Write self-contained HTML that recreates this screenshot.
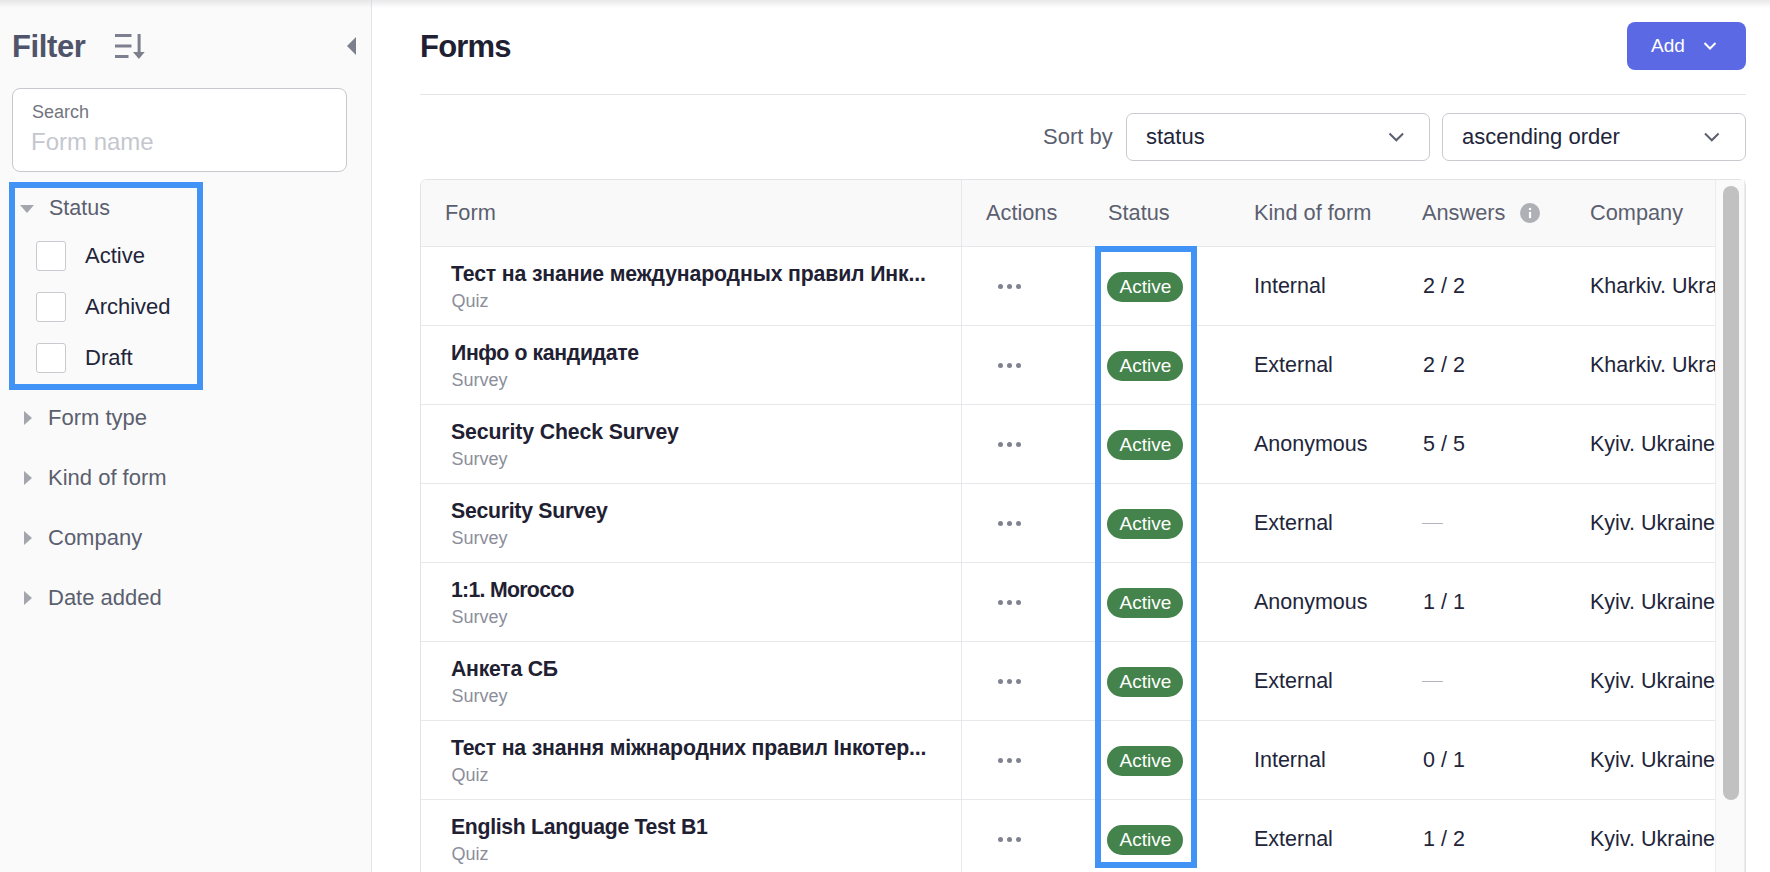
<!DOCTYPE html>
<html><head><meta charset="utf-8"><style>
*{box-sizing:border-box;margin:0;padding:0}
html,body{width:1770px;height:872px;overflow:hidden;background:#fff;font-family:"Liberation Sans",sans-serif}
.a{position:absolute}
.t{position:absolute;line-height:1;white-space:nowrap}
#side{position:absolute;left:0;top:0;width:372px;height:872px;background:#fafafa;border-right:1px solid #e3e3e7}
#shadow{position:absolute;left:0;top:0;width:1770px;height:8px;background:linear-gradient(rgba(210,210,214,0.5),rgba(240,240,242,0));z-index:50}
.cb{position:absolute;left:36px;width:30px;height:30px;border:1px solid #c9cacf;border-radius:3px;background:#fff}
.rt{position:absolute;left:24px;width:0;height:0;border-top:7px solid transparent;border-bottom:7px solid transparent;border-left:8px solid #a4a6ad}
.dot{position:absolute;width:5px;height:5px;border-radius:50%;background:#7f828f}
.badge{position:absolute;left:1107px;width:76px;height:30px;border-radius:15px;background:#44834b}
</style></head><body>
<div id="side"></div>
<div class="t" style="left:12px;top:31px;font-size:31px;font-weight:700;color:#50546a;letter-spacing:-0.4px">Filter</div>
<svg class="a" style="left:112px;top:30px" width="36" height="32" viewBox="112 30 36 32">
<rect x="115" y="34" width="16.5" height="3" fill="#7c7f8d"/><rect x="115" y="44.5" width="16.5" height="3" fill="#7c7f8d"/>
<rect x="115" y="55" width="13.5" height="3" fill="#7c7f8d"/><rect x="137.6" y="34" width="3" height="19" fill="#7c7f8d"/>
<polygon points="133,52 144.7,52 138.9,59" fill="#7c7f8d"/></svg>
<svg class="a" style="left:340px;top:30px" width="24" height="32" viewBox="340 30 24 32"><polygon points="356,37 356,55 347,46" fill="#7c7f8d"/></svg>
<div class="a" style="left:12px;top:88px;width:335px;height:84px;border:1px solid #c8c9cf;border-radius:8px;background:#fff"></div>
<div class="t" style="left:32px;top:103px;font-size:18px;color:#72757f;">Search</div>
<div class="t" style="left:31px;top:130px;font-size:24px;color:#c5c7cf;">Form name</div>
<svg class="a" style="left:18px;top:203px" width="18" height="12" viewBox="18 203 18 12"><polygon points="20,205 34,205 27,213" fill="#a4a6ad"/></svg>
<div class="t" style="left:49px;top:198px;font-size:21.5px;color:#5b5f6f;">Status</div>
<div class="cb" style="top:241px"></div>
<div class="t" style="left:85px;top:245px;font-size:22px;color:#22253a;">Active</div>
<div class="cb" style="top:292px"></div>
<div class="t" style="left:85px;top:296px;font-size:22px;color:#22253a;">Archived</div>
<div class="cb" style="top:343px"></div>
<div class="t" style="left:85px;top:347px;font-size:22px;color:#22253a;">Draft</div>
<div class="rt" style="top:411px"></div>
<div class="t" style="left:48px;top:407px;font-size:22px;color:#5b5f6f;">Form type</div>
<div class="rt" style="top:471px"></div>
<div class="t" style="left:48px;top:467px;font-size:22px;color:#5b5f6f;">Kind of form</div>
<div class="rt" style="top:531px"></div>
<div class="t" style="left:48px;top:527px;font-size:22px;color:#5b5f6f;">Company</div>
<div class="rt" style="top:591px"></div>
<div class="t" style="left:48px;top:587px;font-size:22px;color:#5b5f6f;">Date added</div>
<div class="a" style="left:9px;top:182px;width:194px;height:208px;border:6px solid #4293f6;z-index:40"></div>
<div class="t" style="left:420px;top:31px;font-size:31px;font-weight:700;color:#1f2133;letter-spacing:-0.8px">Forms</div>
<div class="a" style="left:1627px;top:22px;width:119px;height:48px;border-radius:8px;background:#5c69e5"></div>
<div class="t" style="left:1651px;top:36px;font-size:19px;color:#fff;">Add</div>
<svg class="a" style="left:1700px;top:38px" width="20" height="16" viewBox="1700 38 20 16"><polyline points="1704.5,43 1710,48.5 1715.5,43" fill="none" stroke="#fff" stroke-width="2"/></svg>
<div class="a" style="left:420px;top:94px;width:1326px;height:1px;background:#e5e5e9"></div>
<div class="t" style="left:1043px;top:126px;font-size:22px;color:#5b5f6f;">Sort by</div>
<div class="a" style="left:1126px;top:113px;width:304px;height:48px;border:1px solid #c9cacf;border-radius:7px"></div>
<div class="t" style="left:1146px;top:126px;font-size:22px;color:#22253a;">status</div>
<svg class="a" style="left:1385px;top:128px" width="24" height="18" viewBox="1385 128 24 18"><polyline points="1389.5,133.5 1396.3,140.3 1403.1,133.5" fill="none" stroke="#5b5f6f" stroke-width="2"/></svg>
<div class="a" style="left:1442px;top:113px;width:304px;height:48px;border:1px solid #c9cacf;border-radius:7px"></div>
<div class="t" style="left:1462px;top:126px;font-size:22px;color:#22253a;">ascending order</div>
<svg class="a" style="left:1700px;top:128px" width="24" height="18" viewBox="1700 128 24 18"><polyline points="1705,133.5 1711.8,140.3 1718.6,133.5" fill="none" stroke="#5b5f6f" stroke-width="2"/></svg>
<div class="a" style="left:420px;top:179px;width:1326px;height:720px;border:1px solid #e3e3e7;border-radius:7px;overflow:hidden;background:#fff"><div class="a" style="left:0;top:0;width:1324px;height:67px;background:#f9f9fa"></div></div>
<div class="a" style="left:961px;top:180px;width:1px;height:692px;background:#e8e8ec"></div>
<div class="t" style="left:445px;top:202px;font-size:21.75px;color:#5b5f6f;">Form</div>
<div class="t" style="left:986px;top:202px;font-size:21.75px;color:#5b5f6f;">Actions</div>
<div class="t" style="left:1108px;top:202px;font-size:21.75px;color:#5b5f6f;">Status</div>
<div class="t" style="left:1254px;top:202px;font-size:21.75px;color:#5b5f6f;">Kind of form</div>
<div class="t" style="left:1422px;top:202px;font-size:21.75px;color:#5b5f6f;">Answers</div>
<div class="t" style="left:1590px;top:202px;font-size:21.75px;color:#5b5f6f;">Company</div>
<svg class="a" style="left:1520px;top:203px" width="20" height="20" viewBox="0 0 20 20"><circle cx="10" cy="10" r="10" fill="#afb0b6"/>
<rect x="8.9" y="8.9" width="2.2" height="6.2" fill="#fff"/><rect x="8.9" y="4.9" width="2.2" height="2.1" fill="#fff"/></svg>
<div class="a" style="left:421px;top:246px;width:1294px;height:1px;background:#e8e8ec"></div>
<div class="t" style="left:451px;top:264px;font-size:21.25px;font-weight:700;color:#1f2133;letter-spacing:-0.15px">Тест на знание международных правил Инк...</div>
<div class="t" style="left:451.5px;top:292px;font-size:18px;color:#8b8e9a;">Quiz</div>
<div class="dot" style="left:998.2px;top:283.8px"></div>
<div class="dot" style="left:1007.2px;top:283.8px"></div>
<div class="dot" style="left:1016.2px;top:283.8px"></div>
<div class="badge" style="top:272px"></div>
<div class="t" style="left:1119.5px;top:277px;font-size:19px;color:#fff;">Active</div>
<div class="t" style="left:1254px;top:276px;font-size:21.5px;color:#22253a;">Internal</div>
<div class="t" style="left:1423px;top:276px;font-size:21.5px;color:#22253a;">2 / 2</div>
<div class="a" style="left:1590px;top:247px;width:125px;height:78px;overflow:hidden"><div class="t" style="left:0px;top:29px;font-size:21.5px;color:#22253a;">Kharkiv. Ukraine</div></div>
<div class="a" style="left:421px;top:325px;width:1294px;height:1px;background:#e8e8ec"></div>
<div class="t" style="left:451px;top:343px;font-size:21.25px;font-weight:700;color:#1f2133;letter-spacing:-0.37px">Инфо о кандидате</div>
<div class="t" style="left:451.5px;top:371px;font-size:18px;color:#8b8e9a;">Survey</div>
<div class="dot" style="left:998.2px;top:362.8px"></div>
<div class="dot" style="left:1007.2px;top:362.8px"></div>
<div class="dot" style="left:1016.2px;top:362.8px"></div>
<div class="badge" style="top:351px"></div>
<div class="t" style="left:1119.5px;top:356px;font-size:19px;color:#fff;">Active</div>
<div class="t" style="left:1254px;top:355px;font-size:21.5px;color:#22253a;">External</div>
<div class="t" style="left:1423px;top:355px;font-size:21.5px;color:#22253a;">2 / 2</div>
<div class="a" style="left:1590px;top:326px;width:125px;height:78px;overflow:hidden"><div class="t" style="left:0px;top:29px;font-size:21.5px;color:#22253a;">Kharkiv. Ukraine</div></div>
<div class="a" style="left:421px;top:404px;width:1294px;height:1px;background:#e8e8ec"></div>
<div class="t" style="left:451px;top:422px;font-size:21.25px;font-weight:700;color:#1f2133;letter-spacing:-0.12px">Security Check Survey</div>
<div class="t" style="left:451.5px;top:450px;font-size:18px;color:#8b8e9a;">Survey</div>
<div class="dot" style="left:998.2px;top:441.8px"></div>
<div class="dot" style="left:1007.2px;top:441.8px"></div>
<div class="dot" style="left:1016.2px;top:441.8px"></div>
<div class="badge" style="top:430px"></div>
<div class="t" style="left:1119.5px;top:435px;font-size:19px;color:#fff;">Active</div>
<div class="t" style="left:1254px;top:434px;font-size:21.5px;color:#22253a;">Anonymous</div>
<div class="t" style="left:1423px;top:434px;font-size:21.5px;color:#22253a;">5 / 5</div>
<div class="a" style="left:1590px;top:405px;width:125px;height:78px;overflow:hidden"><div class="t" style="left:0px;top:29px;font-size:21.5px;color:#22253a;">Kyiv. Ukraine</div></div>
<div class="a" style="left:421px;top:483px;width:1294px;height:1px;background:#e8e8ec"></div>
<div class="t" style="left:451px;top:501px;font-size:21.25px;font-weight:700;color:#1f2133;letter-spacing:-0.27px">Security Survey</div>
<div class="t" style="left:451.5px;top:529px;font-size:18px;color:#8b8e9a;">Survey</div>
<div class="dot" style="left:998.2px;top:520.8px"></div>
<div class="dot" style="left:1007.2px;top:520.8px"></div>
<div class="dot" style="left:1016.2px;top:520.8px"></div>
<div class="badge" style="top:509px"></div>
<div class="t" style="left:1119.5px;top:514px;font-size:19px;color:#fff;">Active</div>
<div class="t" style="left:1254px;top:513px;font-size:21.5px;color:#22253a;">External</div>
<div class="a" style="left:1422px;top:522.5px;width:21px;height:1.5px;background:#b3b5bc"></div>
<div class="a" style="left:1590px;top:484px;width:125px;height:78px;overflow:hidden"><div class="t" style="left:0px;top:29px;font-size:21.5px;color:#22253a;">Kyiv. Ukraine</div></div>
<div class="a" style="left:421px;top:562px;width:1294px;height:1px;background:#e8e8ec"></div>
<div class="t" style="left:451px;top:580px;font-size:21.25px;font-weight:700;color:#1f2133;letter-spacing:-0.70px">1:1. Morocco</div>
<div class="t" style="left:451.5px;top:608px;font-size:18px;color:#8b8e9a;">Survey</div>
<div class="dot" style="left:998.2px;top:599.8px"></div>
<div class="dot" style="left:1007.2px;top:599.8px"></div>
<div class="dot" style="left:1016.2px;top:599.8px"></div>
<div class="badge" style="top:588px"></div>
<div class="t" style="left:1119.5px;top:593px;font-size:19px;color:#fff;">Active</div>
<div class="t" style="left:1254px;top:592px;font-size:21.5px;color:#22253a;">Anonymous</div>
<div class="t" style="left:1423px;top:592px;font-size:21.5px;color:#22253a;">1 / 1</div>
<div class="a" style="left:1590px;top:563px;width:125px;height:78px;overflow:hidden"><div class="t" style="left:0px;top:29px;font-size:21.5px;color:#22253a;">Kyiv. Ukraine</div></div>
<div class="a" style="left:421px;top:641px;width:1294px;height:1px;background:#e8e8ec"></div>
<div class="t" style="left:451px;top:659px;font-size:21.25px;font-weight:700;color:#1f2133;letter-spacing:-0.26px">Анкета СБ</div>
<div class="t" style="left:451.5px;top:687px;font-size:18px;color:#8b8e9a;">Survey</div>
<div class="dot" style="left:998.2px;top:678.8px"></div>
<div class="dot" style="left:1007.2px;top:678.8px"></div>
<div class="dot" style="left:1016.2px;top:678.8px"></div>
<div class="badge" style="top:667px"></div>
<div class="t" style="left:1119.5px;top:672px;font-size:19px;color:#fff;">Active</div>
<div class="t" style="left:1254px;top:671px;font-size:21.5px;color:#22253a;">External</div>
<div class="a" style="left:1422px;top:680.5px;width:21px;height:1.5px;background:#b3b5bc"></div>
<div class="a" style="left:1590px;top:642px;width:125px;height:78px;overflow:hidden"><div class="t" style="left:0px;top:29px;font-size:21.5px;color:#22253a;">Kyiv. Ukraine</div></div>
<div class="a" style="left:421px;top:720px;width:1294px;height:1px;background:#e8e8ec"></div>
<div class="t" style="left:451px;top:738px;font-size:21.25px;font-weight:700;color:#1f2133;letter-spacing:-0.18px">Тест на знання міжнародних правил Інкотер...</div>
<div class="t" style="left:451.5px;top:766px;font-size:18px;color:#8b8e9a;">Quiz</div>
<div class="dot" style="left:998.2px;top:757.8px"></div>
<div class="dot" style="left:1007.2px;top:757.8px"></div>
<div class="dot" style="left:1016.2px;top:757.8px"></div>
<div class="badge" style="top:746px"></div>
<div class="t" style="left:1119.5px;top:751px;font-size:19px;color:#fff;">Active</div>
<div class="t" style="left:1254px;top:750px;font-size:21.5px;color:#22253a;">Internal</div>
<div class="t" style="left:1423px;top:750px;font-size:21.5px;color:#22253a;">0 / 1</div>
<div class="a" style="left:1590px;top:721px;width:125px;height:78px;overflow:hidden"><div class="t" style="left:0px;top:29px;font-size:21.5px;color:#22253a;">Kyiv. Ukraine</div></div>
<div class="a" style="left:421px;top:799px;width:1294px;height:1px;background:#e8e8ec"></div>
<div class="t" style="left:451px;top:817px;font-size:21.25px;font-weight:700;color:#1f2133;letter-spacing:-0.32px">English Language Test B1</div>
<div class="t" style="left:451.5px;top:845px;font-size:18px;color:#8b8e9a;">Quiz</div>
<div class="dot" style="left:998.2px;top:836.8px"></div>
<div class="dot" style="left:1007.2px;top:836.8px"></div>
<div class="dot" style="left:1016.2px;top:836.8px"></div>
<div class="badge" style="top:825px"></div>
<div class="t" style="left:1119.5px;top:830px;font-size:19px;color:#fff;">Active</div>
<div class="t" style="left:1254px;top:829px;font-size:21.5px;color:#22253a;">External</div>
<div class="t" style="left:1423px;top:829px;font-size:21.5px;color:#22253a;">1 / 2</div>
<div class="a" style="left:1590px;top:800px;width:125px;height:78px;overflow:hidden"><div class="t" style="left:0px;top:29px;font-size:21.5px;color:#22253a;">Kyiv. Ukraine</div></div>
<div class="a" style="left:1715px;top:180px;width:30px;height:692px;background:#fafafa;border-left:1px solid #ececec;border-right:1px solid #ebebeb"></div>
<div class="a" style="left:1723px;top:186px;width:16px;height:614px;border-radius:8px;background:#c1c1c1"></div>
<div class="a" style="left:1095px;top:246px;width:102px;height:622px;border:6px solid #4293f6;z-index:40"></div>
<div id="shadow"></div>
</body></html>
